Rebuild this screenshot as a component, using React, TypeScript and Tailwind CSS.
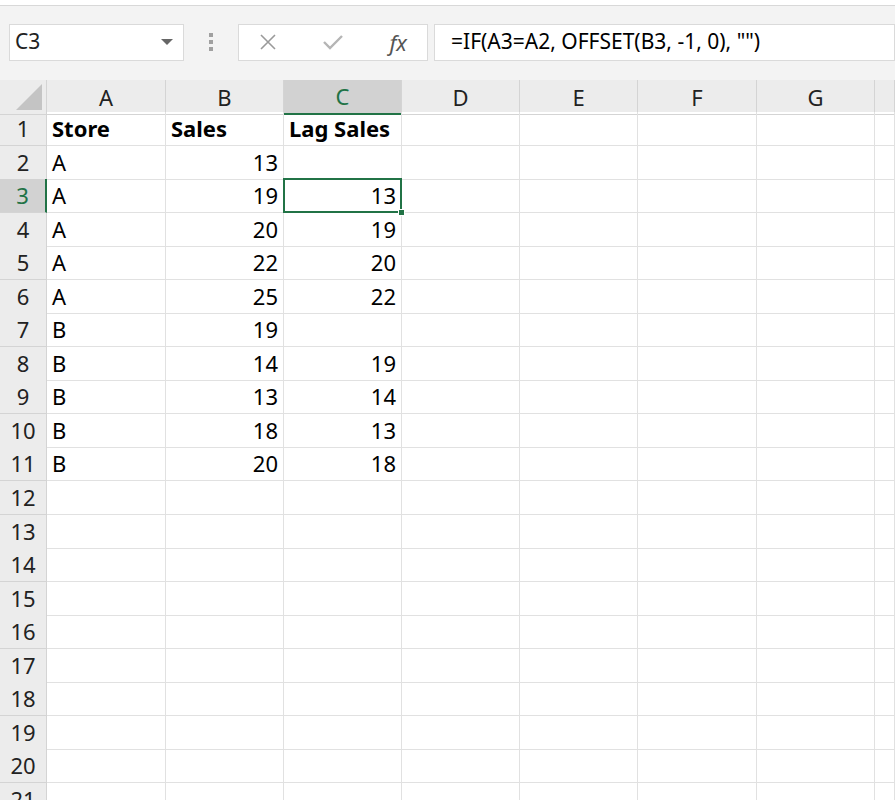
import { FC } from 'react';

const COLS = ['A', 'B', 'C', 'D', 'E', 'F', 'G', ''];
const DATA: [string, string, string][] = [
  ['Store', 'Sales', 'Lag Sales'],
  ['A', '13', ''],
  ['A', '19', '13'],
  ['A', '20', '19'],
  ['A', '22', '20'],
  ['A', '25', '22'],
  ['B', '19', ''],
  ['B', '14', '19'],
  ['B', '13', '14'],
  ['B', '18', '13'],
  ['B', '20', '18'],
];
const GRID = 'grid grid-cols-[47px_119px_118px_118px_118px_118px_119px_118px_1fr]';

const Row: FC<{ n: number }> = ({ n }) => {
  const d = DATA[n - 1];
  const sel = n === 3;
  return (
    <div className={`${GRID} h-[33.55px]`}>
      <div
        className={`flex items-center justify-center border-b border-r border-[#d4d4d4] text-[22px] ${
          sel ? 'bg-[#d2d2d2] text-[#217346] border-r-2 border-r-[#217346]' : 'bg-[#ececec] text-[#222]'
        }`}>
        {n}
      </div>
      {COLS.map((c, i) => {
        const v = d ? (i === 0 ? d[0] : i === 1 ? d[1] : i === 2 ? d[2] : '') : '';
        const bold = n === 1 && i < 3;
        const right = n > 1 && (i === 1 || i === 2);
        const active = sel && i === 2;
        return (
          <div
            key={c + i}
            className={`relative flex items-center whitespace-nowrap border-b border-r border-[#e1e1e1] px-[5px] text-[22px] text-black ${
              right ? 'justify-end' : ''
            } ${bold ? 'font-bold' : ''} ${active ? 'z-10' : 'overflow-hidden'}`}>
            {v}
            {active && (
              <>
                <div className="absolute inset-[-1px] border-2 border-[#217346]" />
                <div className="absolute bottom-[-4px] right-[-4px] h-[7px] w-[7px] border border-white bg-[#217346]" />
              </>
            )}
          </div>
        );
      })}
    </div>
  );
};

export default function App() {
  return (
    <div className="h-[800px] w-[895px] overflow-hidden bg-white font-['Lato','Open_Sans',sans-serif]">
      <div className="h-[6px] border-b border-[#d8d8d8] bg-white" />
      <div className="flex h-[74px] items-center gap-0 bg-[#f3f3f3] pb-[2px] pl-[9px]">
        <div className="flex h-[37px] w-[175px] items-center justify-between border border-[#dadada] bg-white pl-[5px] pr-[10px] text-[21px] text-[#222]">
          C3
          <span className="h-0 w-0 border-x-[6px] border-t-[6px] border-x-transparent border-t-[#666]" />
        </div>
        <div className="flex w-[54px] flex-col items-center gap-[3px]">
          <span className="h-[4px] w-[4px] bg-[#a0a0a0]" />
          <span className="h-[4px] w-[4px] bg-[#a0a0a0]" />
          <span className="h-[4px] w-[4px] bg-[#a0a0a0]" />
        </div>
        <div className="flex h-[37px] w-[190px] items-center justify-between border border-[#dadada] bg-white px-[20px] text-[#a8a8a8]">
          <svg width="18" height="18" viewBox="0 0 18 18" stroke="#9a9a9a" strokeWidth="1.6">
            <path d="M2 2L16 16M16 2L2 16" />
          </svg>
          <svg width="22" height="18" viewBox="0 0 22 18" stroke="#b5b5b5" strokeWidth="2.4" fill="none">
            <path d="M2 9L8 15L20 3" />
          </svg>
          <span className="font-['Liberation_Serif',serif] text-[22px] italic text-[#555]">fx</span>
        </div>
        <div className="ml-[6px] flex h-[37px] flex-1 items-center border border-[#dadada] bg-white pl-[16px] text-[21px] text-black">
          =IF(A3=A2, OFFSET(B3, -1, 0), "")
        </div>
      </div>
      <div className={`${GRID} h-[32px] bg-[#ececec]`}>
        <div className="relative border-b border-r border-[#d4d4d4]">
          <div className="absolute bottom-[4px] right-[4px] h-0 w-0 border-b-[26px] border-l-[26px] border-b-[#c4c4c4] border-l-transparent" />
        </div>
        {COLS.map((c, i) => (
          <div
            key={c + i}
            className={`flex items-center justify-center border-b border-r border-[#d4d4d4] text-[22px] ${
              i === 2 ? 'border-b-2 border-b-[#217346] bg-[#d2d2d2] text-[#217346]' : 'text-[#222]'
            }`}>
            {c}
          </div>
        ))}
      </div>
      {Array.from({ length: 21 }, (_, i) => (
        <Row key={i} n={i + 1} />
      ))}
    </div>
  );
}
